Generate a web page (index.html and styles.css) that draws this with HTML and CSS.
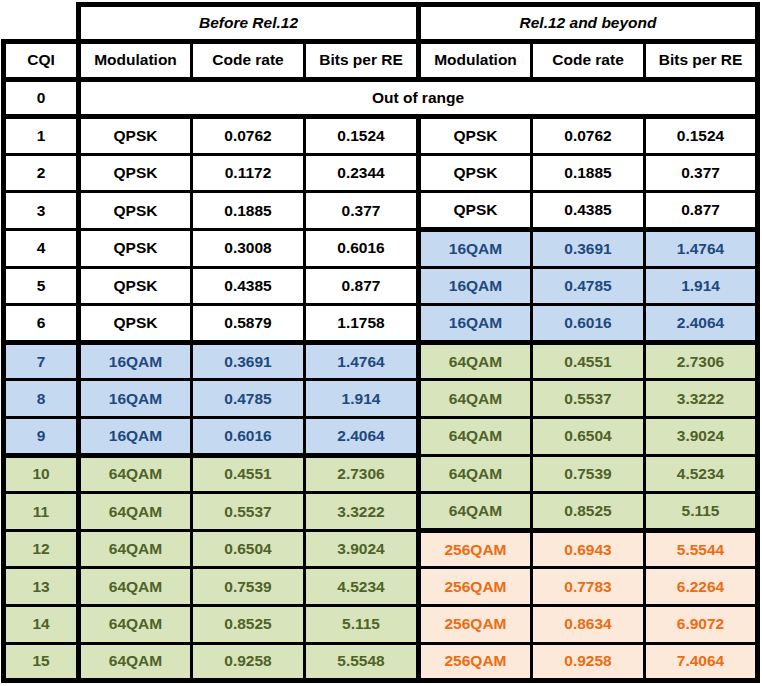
FILE: index.html
```html
<!DOCTYPE html>
<html>
<head>
<meta charset="utf-8">
<link rel="stylesheet" href="styles.css">
</head>
<body>
<table class="cqi-table">
  <colgroup>
    <col class="c-cqi"><col class="c-w"><col class="c-w"><col class="c-w2"><col class="c-w"><col class="c-w"><col class="c-w">
  </colgroup>
  <tr class="h1">
    <td class="corner"></td>
    <td colspan="3" class="group">Before Rel.12</td>
    <td colspan="3" class="group gr">Rel.12 and beyond</td>
  </tr>
  <tr class="h2 tb">
    <td class="cqi">CQI</td>
    <td>Modulation</td><td>Code rate</td><td class="bl">Bits per RE</td>
    <td>Modulation</td><td>Code rate</td><td class="br">Bits per RE</td>
  </tr>
  <tr class="tb">
    <td class="cqi">0</td>
    <td colspan="6" class="br">Out of range</td>
  </tr>
  <tr><td class="cqi">1</td><td>QPSK</td><td>0.0762</td><td class="bl">0.1524</td><td>QPSK</td><td>0.0762</td><td class="br">0.1524</td></tr>
  <tr><td class="cqi">2</td><td>QPSK</td><td>0.1172</td><td class="bl">0.2344</td><td>QPSK</td><td>0.1885</td><td class="br">0.377</td></tr>
  <tr class="tbr"><td class="cqi">3</td><td>QPSK</td><td>0.1885</td><td class="bl">0.377</td><td class="r">QPSK</td><td class="r">0.4385</td><td class="r br">0.877</td></tr>
  <tr><td class="cqi">4</td><td>QPSK</td><td>0.3008</td><td class="bl">0.6016</td><td class="blue">16QAM</td><td class="blue">0.3691</td><td class="blue br">1.4764</td></tr>
  <tr><td class="cqi">5</td><td>QPSK</td><td>0.4385</td><td class="bl">0.877</td><td class="blue">16QAM</td><td class="blue">0.4785</td><td class="blue br">1.914</td></tr>
  <tr class="tb"><td class="cqi">6</td><td>QPSK</td><td>0.5879</td><td class="bl">1.1758</td><td class="blue">16QAM</td><td class="blue">0.6016</td><td class="blue br">2.4064</td></tr>
  <tr><td class="cqi blue">7</td><td class="blue">16QAM</td><td class="blue">0.3691</td><td class="blue bl">1.4764</td><td class="green">64QAM</td><td class="green">0.4551</td><td class="green br">2.7306</td></tr>
  <tr><td class="cqi blue">8</td><td class="blue">16QAM</td><td class="blue">0.4785</td><td class="blue bl">1.914</td><td class="green">64QAM</td><td class="green">0.5537</td><td class="green br">3.3222</td></tr>
  <tr class="tbl"><td class="cqi blue l">9</td><td class="blue l">16QAM</td><td class="blue l">0.6016</td><td class="blue bl l">2.4064</td><td class="green">64QAM</td><td class="green">0.6504</td><td class="green br">3.9024</td></tr>
  <tr><td class="cqi green">10</td><td class="green">64QAM</td><td class="green">0.4551</td><td class="green bl">2.7306</td><td class="green">64QAM</td><td class="green">0.7539</td><td class="green br">4.5234</td></tr>
  <tr class="tbr"><td class="cqi green">11</td><td class="green">64QAM</td><td class="green">0.5537</td><td class="green bl">3.3222</td><td class="green r">64QAM</td><td class="green r">0.8525</td><td class="green br r">5.115</td></tr>
  <tr><td class="cqi green">12</td><td class="green">64QAM</td><td class="green">0.6504</td><td class="green bl">3.9024</td><td class="orange">256QAM</td><td class="orange">0.6943</td><td class="orange br">5.5544</td></tr>
  <tr><td class="cqi green">13</td><td class="green">64QAM</td><td class="green">0.7539</td><td class="green bl">4.5234</td><td class="orange">256QAM</td><td class="orange">0.7783</td><td class="orange br">6.2264</td></tr>
  <tr><td class="cqi green">14</td><td class="green">64QAM</td><td class="green">0.8525</td><td class="green bl">5.115</td><td class="orange">256QAM</td><td class="orange">0.8634</td><td class="orange br">6.9072</td></tr>
  <tr class="tb"><td class="cqi green">15</td><td class="green">64QAM</td><td class="green">0.9258</td><td class="green bl">5.5548</td><td class="orange">256QAM</td><td class="orange">0.9258</td><td class="orange br">7.4064</td></tr>
</table>
</body>
</html>
```

FILE: styles.css
```css
html, body {
  margin: 0;
  padding: 0;
  background: #ffffff;
}

body {
  padding: 1.5px 0 0 1px;
}

.cqi-table {
  border-collapse: collapse;
  table-layout: fixed;
  width: 754px;
  font-family: "Liberation Sans", Arial, sans-serif;
  font-weight: bold;
  font-size: 15.5px;
  color: #000;
}

.c-cqi { width: 75px; }
.c-w { width: 113px; }
.c-w2 { width: 114px; }

.cqi-table tr {
  height: 37.6px;
}

.cqi-table td {
  border: 3px solid #000;
  padding: 0;
  text-align: center;
  vertical-align: middle;
  white-space: nowrap;
}

.cqi-table tr.h1 td {
  border-top-width: 5px;
  border-bottom-width: 5px;
}

.cqi-table td.corner {
  border-top: none;
  border-left: none;
}

.cqi-table td.group {
  font-style: italic;
  border-left-width: 5px;
  border-right-width: 5px;
}

.cqi-table tr.tb td { border-bottom-width: 5px; }
.cqi-table tr.tbr td.r { border-bottom-width: 5px; }
.cqi-table tr.tbl td.l { border-bottom-width: 5px; }

.cqi-table td.cqi {
  border-left-width: 5px;
  border-right-width: 5px;
}

.cqi-table td.bl,
.cqi-table td.br {
  border-right-width: 5px;
}

.cqi-table td.blue {
  background: #c5d9f1;
  color: #1f497d;
}

.cqi-table td.green {
  background: #d8e4bc;
  color: #4f6228;
}

.cqi-table td.orange {
  background: #fde9d9;
  color: #ec6c14;
}
```
